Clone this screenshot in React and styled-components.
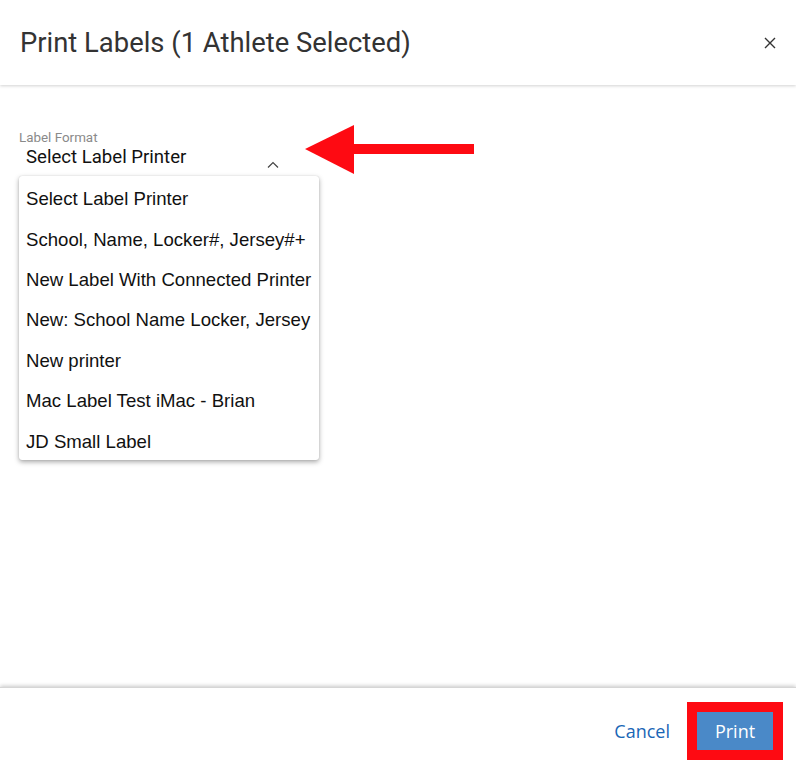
import React from "react";
import styled, { createGlobalStyle } from "styled-components";

const GlobalStyle = createGlobalStyle`
  html, body {
    margin: 0;
    padding: 0;
    background: #fff;
  }
  #root {
    height: 768px;
  }
`;

const Modal = styled.div`
  width: 796px;
  height: 768px;
  display: flex;
  flex-direction: column;
  background: #fff;
  overflow: hidden;
`;

const Header = styled.header`
  height: 85px;
  flex-shrink: 0;
  display: flex;
  align-items: center;
  justify-content: space-between;
  padding: 0 18px 0 20px;
  box-sizing: border-box;
  box-shadow: 0 1px 3px rgba(0, 0, 0, 0.18);
  position: relative;
  z-index: 2;
`;

const Title = styled.h1`
  margin: 0;
  font-family: Roboto, "Liberation Sans", sans-serif;
  font-weight: 400;
  font-size: 27.4px;
  color: #333;
`;

const CloseButton = styled.button`
  border: none;
  background: none;
  padding: 0;
  width: 16px;
  height: 16px;
  display: flex;
  align-items: center;
  justify-content: center;
  cursor: pointer;
`;

const Body = styled.main`
  flex: 1;
  padding: 46px 19px 0;
  display: flex;
  align-items: flex-start;
  gap: 30px;
`;

const Field = styled.div`
  width: 300px;
  display: flex;
  flex-direction: column;
`;

const FieldLabel = styled.label`
  font-family: Roboto, "Liberation Sans", sans-serif;
  font-size: 13.4px;
  color: #8a8a8a;
  line-height: 14px;
`;

const SelectRow = styled.div`
  display: flex;
  align-items: center;
  justify-content: space-between;
  padding: 1px 40px 0 7px;
  height: 22px;
  font-family: Roboto, "Liberation Sans", sans-serif;
  font-size: 18.6px;
  color: #111;
`;

const Chevron = styled.svg`
  margin-top: 14px;
`;

const Menu = styled.ul`
  list-style: none;
  margin: 8px 0 0;
  padding: 3px 0 0;
  width: 300px;
  height: 284px;
  box-sizing: border-box;
  background: #fff;
  border-radius: 3px;
  box-shadow: 0 2px 5px rgba(0, 0, 0, 0.35), 0 0 1px rgba(0, 0, 0, 0.2);
`;

const MenuItem = styled.li`
  height: 40.4px;
  display: flex;
  align-items: center;
  padding: 0 7px;
  font-family: "Liberation Sans", Arial, sans-serif;
  font-size: 18.6px;
  color: #111;
  white-space: nowrap;
`;

const Arrow = styled.svg`
  margin-top: -6px;
  margin-left: -44px;
`;

const Footer = styled.footer`
  height: 81px;
  flex-shrink: 0;
  display: flex;
  align-items: center;
  justify-content: flex-end;
  gap: 17px;
  padding: 6px 13px 0 0;
  box-sizing: border-box;
  box-shadow: 0 -1px 4px rgba(0, 0, 0, 0.22);
  border-top: 1px solid #d6d6d6;
  position: relative;
`;

const LinkButton = styled.button`
  border: none;
  background: none;
  padding: 0;
  font-family: "Open Sans", "Liberation Sans", sans-serif;
  font-size: 18px;
  color: #1a66b6;
  cursor: pointer;
`;

const Highlight = styled.div`
  border: 10px solid #fe0a12;
  line-height: 0;
`;

const PrimaryButton = styled.button`
  border: none;
  background: #4a89c8;
  color: #fff;
  width: 76px;
  height: 38px;
  font-family: "Open Sans", "Liberation Sans", sans-serif;
  font-size: 18px;
  cursor: pointer;
`;

const options = [
  "Select Label Printer",
  "School, Name, Locker#, Jersey#+",
  "New Label With Connected Printer",
  "New: School Name Locker, Jersey",
  "New printer",
  "Mac Label Test iMac - Brian",
  "JD Small Label",
];

export default function App() {
  return (
    <>
      <GlobalStyle />
      <Modal>
        <Header>
          <Title>Print Labels (1 Athlete Selected)</Title>
          <CloseButton aria-label="Close">
            <svg width="12" height="12" viewBox="0 0 12 12">
              <path d="M1 1L11 11M11 1L1 11" stroke="#333" strokeWidth="1.4" />
            </svg>
          </CloseButton>
        </Header>
        <Body>
          <Field>
            <FieldLabel>Label Format</FieldLabel>
            <SelectRow>
              <span>Select Label Printer</span>
              <Chevron width="12" height="7" viewBox="0 0 12 7">
                <path d="M1 6.5L6 1.5L11 6.5" stroke="#444" strokeWidth="1.2" fill="none" />
              </Chevron>
            </SelectRow>
            <Menu>
              {options.map((o) => (
                <MenuItem key={o}>{o}</MenuItem>
              ))}
            </Menu>
          </Field>
          <Arrow width="170" height="50" viewBox="0 0 170 50">
            <polygon points="0,24 49,0 49,49" fill="#fe0a12" />
            <rect x="48" y="19" width="121" height="10" fill="#fe0a12" />
          </Arrow>
        </Body>
        <Footer>
          <LinkButton>Cancel</LinkButton>
          <Highlight>
            <PrimaryButton>Print</PrimaryButton>
          </Highlight>
        </Footer>
      </Modal>
    </>
  );
}
